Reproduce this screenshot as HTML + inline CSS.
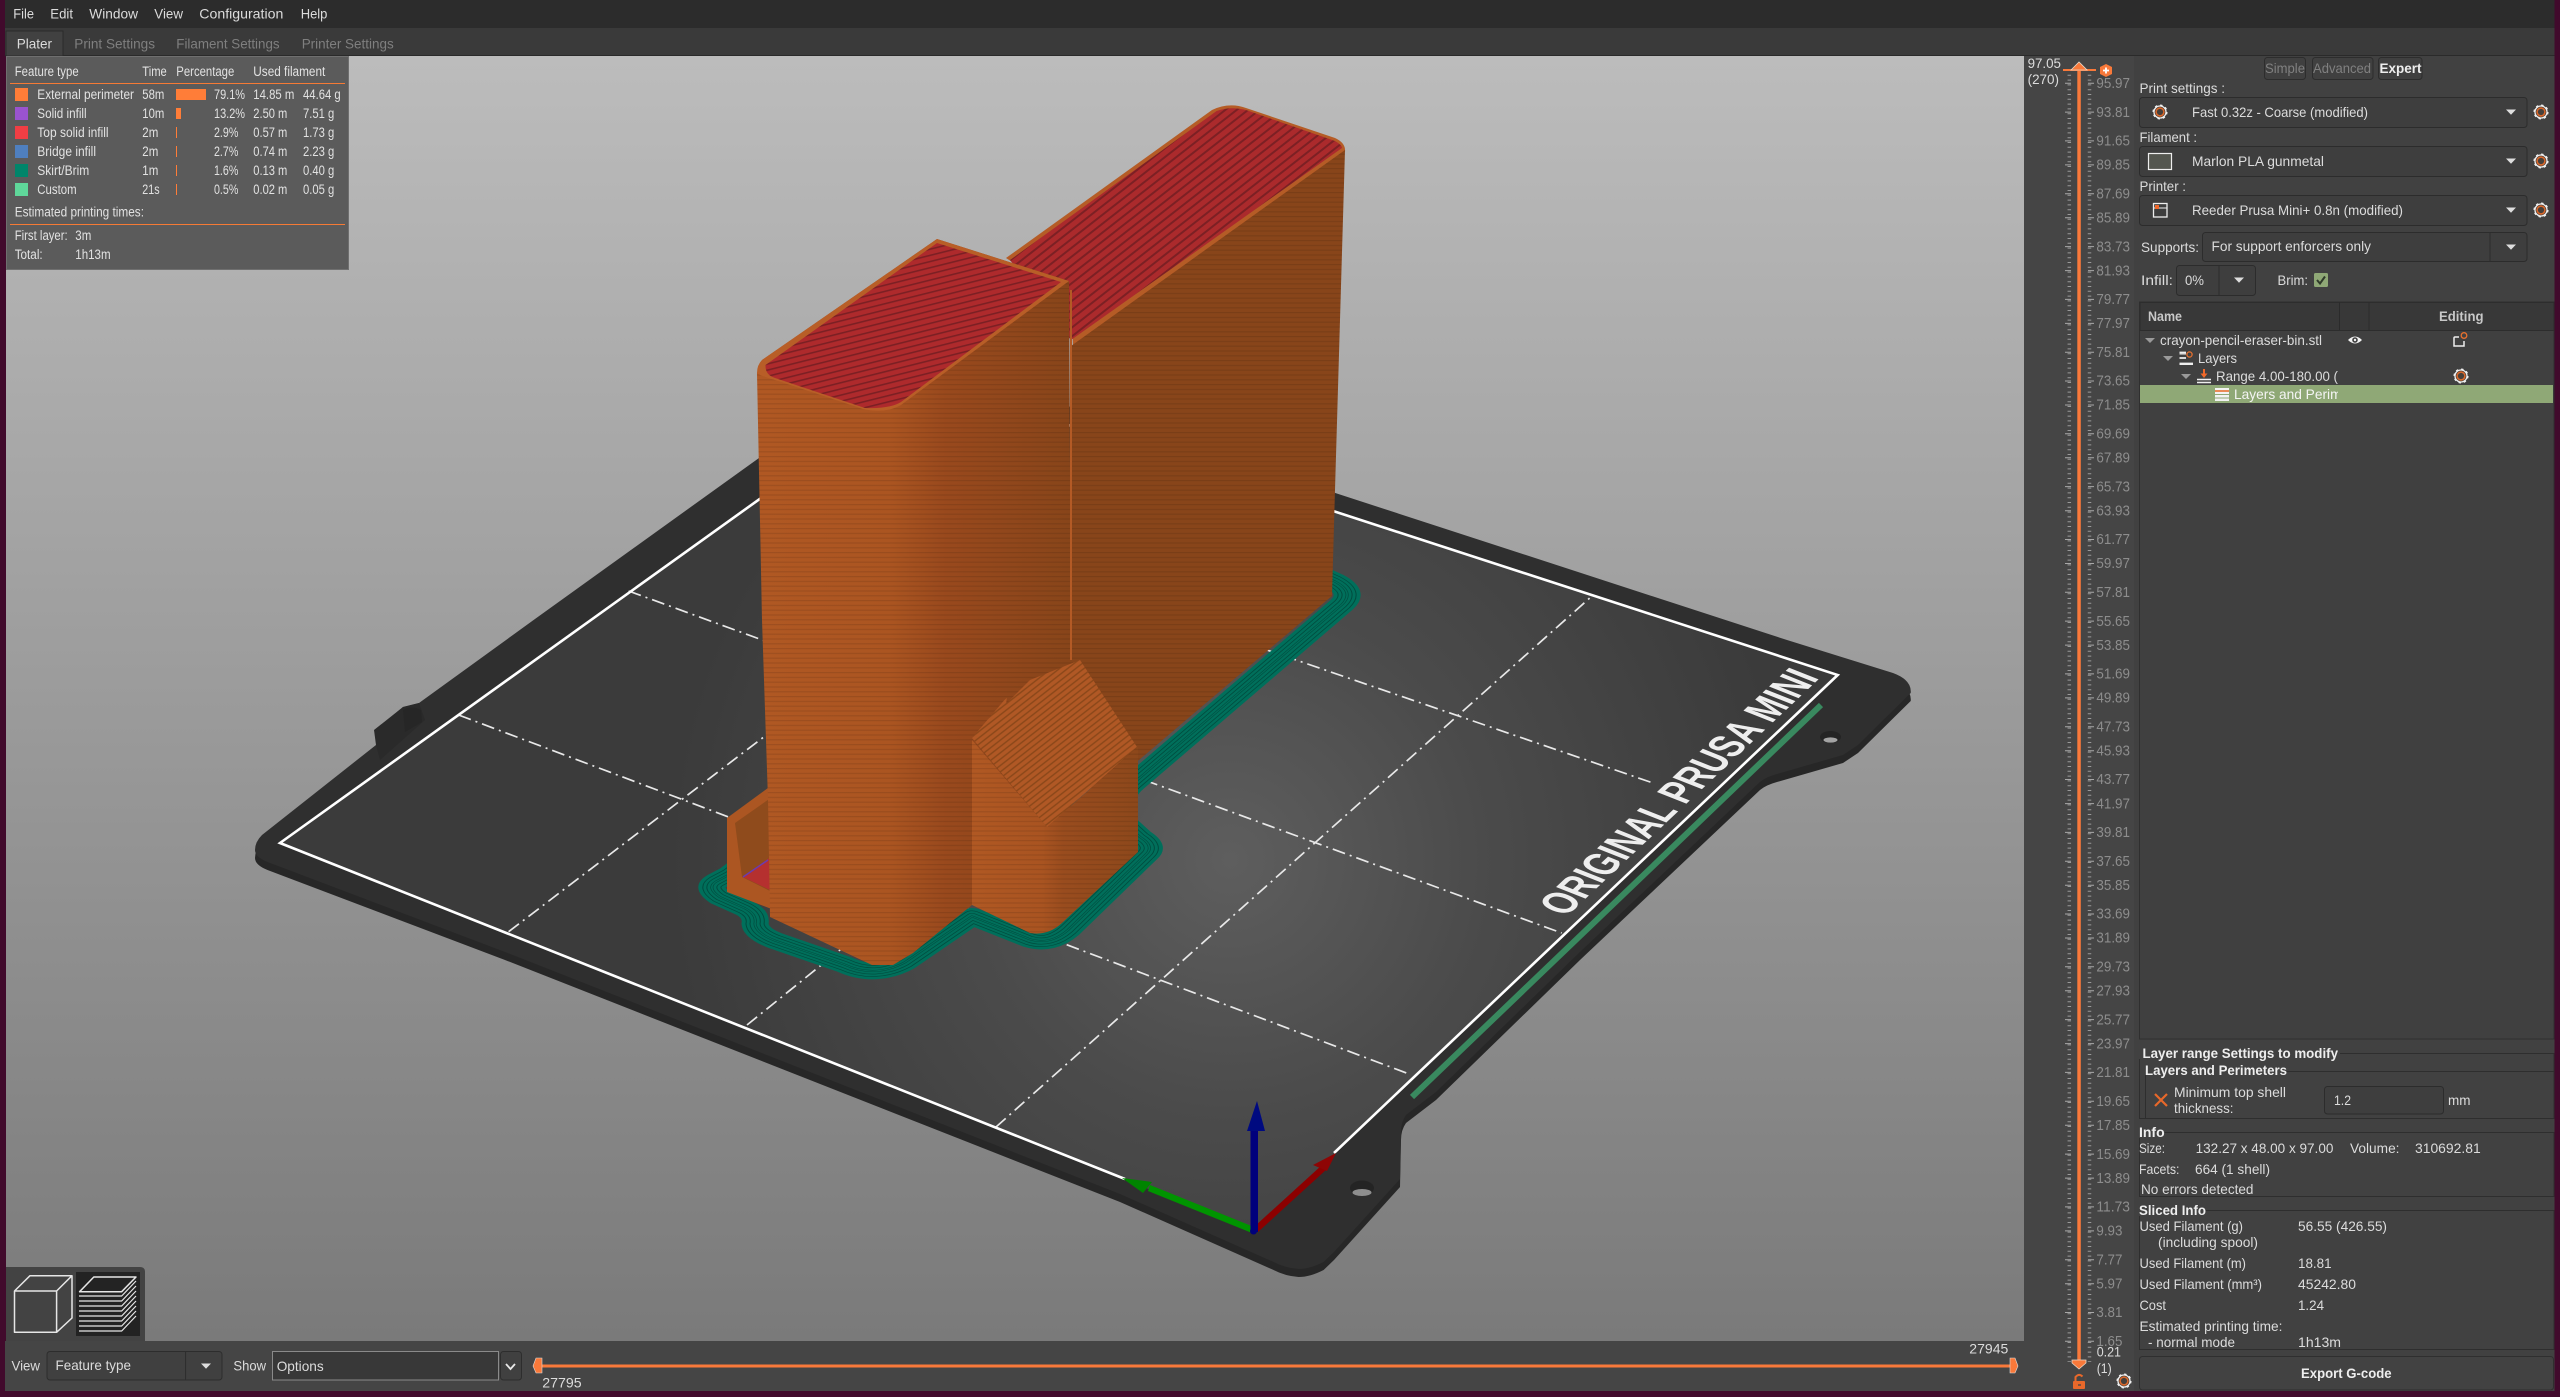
<!DOCTYPE html>
<html lang="en"><head><meta charset="utf-8"><title>PrusaSlicer</title>
<style>
html,body{margin:0;padding:0;background:#410a2c;width:2560px;height:1397px;overflow:hidden}
svg{display:block}
text{font-family:"Liberation Sans",sans-serif;font-size:14px;fill:#dcdcdc;white-space:pre}
.l text,text.l{font-size:13.5px;fill:#e2e2e2}
.t text{fill:#8d8d8d;font-size:14.5px}
.b{font-weight:bold}
.g{fill:#eee}
</style></head><body>
<svg width="2560" height="1397" viewBox="0 0 2560 1397" xmlns="http://www.w3.org/2000/svg">
<defs>
<linearGradient id="bg" x1="0" y1="56" x2="0" y2="1341" gradientUnits="userSpaceOnUse"><stop offset="0" stop-color="#bcbcbc"/><stop offset="1" stop-color="#7a7a7a"/></linearGradient>
<radialGradient id="pl" gradientUnits="userSpaceOnUse" cx="1230" cy="860" r="560"><stop offset="0" stop-color="#5e5e5e"/><stop offset=".45" stop-color="#4b4b4b"/><stop offset="1" stop-color="#3b3b3b"/></radialGradient>
<linearGradient id="tw" gradientUnits="userSpaceOnUse" x1="757" y1="0" x2="1071" y2="0"><stop offset="0" stop-color="#b05823"/><stop offset=".42" stop-color="#ab5521"/><stop offset=".6" stop-color="#99491d"/><stop offset="1" stop-color="#88451a"/></linearGradient>
<linearGradient id="ho" gradientUnits="userSpaceOnUse" x1="972" y1="0" x2="1138" y2="0"><stop offset="0" stop-color="#b05823"/><stop offset=".42" stop-color="#a95421"/><stop offset=".55" stop-color="#994c1e"/><stop offset="1" stop-color="#8d481b"/></linearGradient>
<pattern id="st" width="5" height="4.8" patternUnits="userSpaceOnUse"><rect width="5" height="1.2" fill="#000" opacity=".1"/></pattern>
<pattern id="rs" width="7" height="7" patternUnits="userSpaceOnUse" patternTransform="rotate(52)"><rect width="7" height="7" fill="#ab2a2c"/><rect width="2" height="7" fill="#7c2024"/></pattern>
<pattern id="rt" width="7" height="6" patternUnits="userSpaceOnUse" patternTransform="rotate(-14)"><rect width="7" height="6" fill="#ae2a2c"/><rect y="4" width="7" height="1.6" fill="#7c2024"/></pattern>
<pattern id="rf" width="5" height="5" patternUnits="userSpaceOnUse" patternTransform="rotate(-38)"><rect width="5" height="5" fill="#b05825"/><rect y="3.4" width="5" height="1.4" fill="#8a4719"/></pattern>
<path id="bed" d="M255,850Q255,842 262,835L376,745L376,730L403,707L419,703L533.6,620L905,353L1787,640L1893,673Q1912,680 1910.7,693L1858,745L1843,755L1777,774Q1766,777 1760,782L1580,952L1436,1092L1406,1115Q1401,1122 1401,1132L1400,1179L1334,1252L1323.6,1262Q1310,1269 1298.6,1269Q1285,1268 1273.6,1262L1120,1194L505,952L267.5,862Q255,857 255,850Z"/>
<path id="sk" fill="none" stroke-linejoin="round" stroke-linecap="round" d="M730,1410L716,1422Q706,1432 720,1447L745,1465Q757,1475 755,1490Q756,1505 775,1517L845,1556Q875,1578 905,1552L972,1478L1030,1515Q1050,1525 1068,1500L1146,1378Q1155,1365 1140,1350L1110,1306L1130,1268L1342,975Q1355,955 1335,938L1200,839Z"/>
<polygon id="twp" points="757,373 762,360 937,239 1069,281 1071,660 1071,870 972,905 913,953 893,965 872,965 770,917 768,800 762,620"/>
<polygon id="wlp" points="1071,346 1345,150 1335,490 1332,596 1139,760 1071,800"/>
<path id="hop" d="M972,740L1047,827L1138,747V852L1062,923Q1048,936 1030,933L972,905Z"/>
<g id="cog"><circle r="6" fill="#3f3a36" stroke="#f0f0f0" stroke-width="1.300"/><circle r="6.900" fill="none" stroke="#f0f0f0" stroke-width="1.300" stroke-dasharray="2.500 2.900"/><circle r="3.900" fill="#46403b" stroke="#d9682c" stroke-width="1.600"/></g>
<polygon id="ar" points="-5,-2.5 5,-2.5 0,2.8" fill="#dedede"/>
</defs>

<rect width="2560" height="1397" fill="#410a2c"/>
<rect x="5" y="0" width="2550" height="28" fill="#2c2c2c"/>
<rect x="5" y="28" width="2550" height="28" fill="#3a3a3a"/>
<rect x="5" y="55" width="2550" height="1" fill="#2a2a2a"/>
<rect x="6" y="31" width="57" height="25" fill="#414141" stroke="#2a2a2a"/>

<g fill="#e0e0e0">
<text x="13.3" y="18.7" textLength="20.7" lengthAdjust="spacingAndGlyphs">File</text>
<text x="50.3" y="18.7" textLength="22.7" lengthAdjust="spacingAndGlyphs">Edit</text>
<text x="89.3" y="18.7" textLength="48.7" lengthAdjust="spacingAndGlyphs">Window</text>
<text x="154.3" y="18.7" textLength="28.7" lengthAdjust="spacingAndGlyphs">View</text>
<text x="199.3" y="18.7" textLength="84" lengthAdjust="spacingAndGlyphs">Configuration</text>
<text x="300.7" y="18.7" textLength="26.7" lengthAdjust="spacingAndGlyphs">Help</text>
<text x="16.7" y="48.7" textLength="35.3" lengthAdjust="spacingAndGlyphs">Plater</text>
<text x="74.3" y="48.7" textLength="80.7" lengthAdjust="spacingAndGlyphs" style="fill:#7f7f7f">Print Settings</text>
<text x="176.3" y="48.7" textLength="103.3" lengthAdjust="spacingAndGlyphs" style="fill:#7f7f7f">Filament Settings</text>
<text x="301.7" y="48.7" textLength="92" lengthAdjust="spacingAndGlyphs" style="fill:#7f7f7f">Printer Settings</text>
</g>

<!-- 3D canvas -->
<rect x="6" y="56" width="2018" height="1285" fill="url(#bg)"/>
<use href="#bed" y="8" fill="#272727"/>
<use href="#bed" fill="#2f2f2f"/>
<path d="M376,745L374,730L403,707L419,703L425,720L380,760Z" fill="#2a2a2a"/>
<path d="M403,710Q412,705 421,710L422,722L405,732Z" fill="#262626"/>
<polygon points="280,843 927,379 1837.7,675 1254,1231" fill="url(#pl)"/>
<g fill="none" stroke="#e8e8e8" stroke-width="1.7" stroke-dasharray="13 5 2 5">
<path d="M458.6,715L1409,1074"/>
<path d="M628.6,591L1561.7,933"/>
<path d="M1000,558L1653,783"/>
<path d="M508.6,931.7L900,633"/>
<path d="M747,1025L1100,740"/>
<path d="M996,1127L1592,596"/>
</g>
<path d="M1125,1179L280,843L927,379L1837.7,675L1334,1153" fill="none" stroke="#fff" stroke-width="2.6"/>
<text transform="matrix(0.728,-0.685,0.93,0.37,1566,917)" x="0" y="0" textLength="349" lengthAdjust="spacingAndGlyphs" style="font-size:46px;fill:#eee;font-weight:bold">ORIGINAL PRUSA MINI</text>
<path d="M1412,1097L1821,705" stroke="#39895f" stroke-width="6" fill="none"/>
<ellipse cx="1362" cy="1188" rx="12" ry="7.5" fill="#242424"/><ellipse cx="1362" cy="1192.5" rx="9.5" ry="3.5" fill="#8e8e8e"/>
<ellipse cx="1830.500" cy="737" rx="10.500" ry="6" fill="#242424"/><ellipse cx="1830.500" cy="740" rx="7" ry="2.600" fill="#a3a3a3"/>

<!-- skirt -->
<g transform="scale(1,.62)">
<use href="#sk" stroke="#006f5b" stroke-width="27"/>
<use href="#sk" stroke="#004c3e" stroke-width="19"/>
<use href="#sk" stroke="#006f5b" stroke-width="17"/>
<use href="#sk" stroke="#004c3e" stroke-width="11"/>
<use href="#sk" stroke="#006f5b" stroke-width="9"/>
<use href="#sk" stroke="#004c3e" stroke-width="3"/>
<use href="#sk" stroke="#006f5b" stroke-width="1.600"/>
</g>

<!-- small front box -->
<polygon points="727,818 772,785 780,910 769,908 727,892" fill="#ac5622"/>
<polygon points="735,823 772,797 772,892 742,877" fill="#8f4b1c"/>
<polygon points="743,877 772,856 772,891" fill="#b5302f"/>
<path d="M743,877L768,860" stroke="#6a3bb0" stroke-width="1.500" fill="none"/>

<!-- back wall -->
<path d="M1006,258L1212,110Q1229,102 1246,108L1335,138Q1346,143 1345,152L1073,346L1071,300Z" fill="#b55c26"/>
<path d="M1010,260L1216.600,111Q1230,106 1246,110L1335,141Q1342,145 1342,148L1071,340Z" fill="url(#rs)"/>
<use href="#wlp" fill="#88451a"/><use href="#wlp" fill="url(#st)"/>

<!-- tower -->
<use href="#twp" fill="url(#tw)"/><use href="#twp" fill="url(#st)"/>
<path d="M757,373Q757,365 762,360L937,239L1069,281L901,405Q885,414 863,409L775,380Q758,375 757,373Z" fill="#b85e27"/>
<path d="M765.500,365L937,243L1061,282L901,402Q890,409 865,408L775,378Q765,375 765.500,365Z" fill="url(#rt)"/>
<path d="M1071,290V660" stroke="#b35a25" stroke-width="2" fill="none"/>

<!-- small house -->
<use href="#hop" fill="url(#ho)"/><use href="#hop" fill="url(#st)"/>
<polygon points="972,738 1007,697 1006,704 1030,680 1080,660 1137,747 1047,827" fill="url(#rf)"/>

<!-- axes -->
<polygon points="1254,1232 1255,1226 1322,1165 1327,1169 1258,1232" fill="#8c0000"/>
<polygon points="1336,1153 1313,1165 1327,1171" fill="#8e0505"/>
<polygon points="1252,1233 1148,1191 1150,1185 1254,1227" fill="#009400"/>
<polygon points="1122,1178 1152,1182 1143,1193" fill="#008400"/>
<rect x="1250.500" y="1130" width="7.500" height="102" fill="#00007c"/>
<circle cx="1253.500" cy="1231" r="3.500" fill="#00007c"/>
<polygon points="1257,1101 1247,1131 1265,1131" fill="#000a80"/>

<!-- legend -->
<rect x="6.500" y="56.500" width="342" height="213" fill="#5b5b5b" stroke="#6f6f6f"/>
<rect x="10" y="83" width="335" height="1" fill="#f57a35"/>
<rect x="10" y="224" width="335" height="1" fill="#f57a35"/>
<g class="l">
<text x="14.700" y="76" textLength="64" lengthAdjust="spacingAndGlyphs">Feature type</text>
<text x="142.300" y="76" textLength="24.500" lengthAdjust="spacingAndGlyphs">Time</text>
<text x="176.300" y="76" textLength="58" lengthAdjust="spacingAndGlyphs">Percentage</text>
<text x="253.300" y="76" textLength="72" lengthAdjust="spacingAndGlyphs">Used filament</text>

<rect x="15" y="88" width="13" height="13" fill="#ff7d38"/>
<rect x="15" y="107" width="13" height="13" fill="#9a53cf"/>
<rect x="15" y="126" width="13" height="13" fill="#f03e44"/>
<rect x="15" y="145" width="13" height="13" fill="#4f7fbf"/>
<rect x="15" y="164" width="13" height="13" fill="#00856a"/>
<rect x="15" y="183" width="13" height="13" fill="#5fd79a"/>
<g fill="#ff7d38">
<rect x="176" y="89" width="30" height="11"/><rect x="176" y="108" width="5" height="11"/><rect x="176" y="127" width="1" height="11"/><rect x="176" y="146" width="1" height="11"/><rect x="176" y="165" width="1" height="11"/><rect x="176" y="184" width="1" height="11"/>
</g>
<text x="37.300" y="99" textLength="96.700" lengthAdjust="spacingAndGlyphs">External perimeter</text>
<text x="142.300" y="99" textLength="22" lengthAdjust="spacingAndGlyphs">58m</text>
<text x="214" y="99" textLength="31" lengthAdjust="spacingAndGlyphs">79.1%</text>
<text x="253.300" y="99" textLength="41" lengthAdjust="spacingAndGlyphs">14.85 m</text>
<text x="303" y="99" textLength="37.700" lengthAdjust="spacingAndGlyphs">44.64 g</text>

<text x="37.300" y="118" textLength="49.300" lengthAdjust="spacingAndGlyphs">Solid infill</text>
<text x="142.300" y="118" textLength="22" lengthAdjust="spacingAndGlyphs">10m</text>
<text x="214" y="118" textLength="31" lengthAdjust="spacingAndGlyphs">13.2%</text>
<text x="253.300" y="118" textLength="34" lengthAdjust="spacingAndGlyphs">2.50 m</text>
<text x="303" y="118" textLength="31.300" lengthAdjust="spacingAndGlyphs">7.51 g</text>

<text x="37.300" y="137" textLength="71.300" lengthAdjust="spacingAndGlyphs">Top solid infill</text>
<text x="142.300" y="137" textLength="16" lengthAdjust="spacingAndGlyphs">2m</text>
<text x="214" y="137" textLength="24.300" lengthAdjust="spacingAndGlyphs">2.9%</text>
<text x="253.300" y="137" textLength="34" lengthAdjust="spacingAndGlyphs">0.57 m</text>
<text x="303" y="137" textLength="31.300" lengthAdjust="spacingAndGlyphs">1.73 g</text>

<text x="37.300" y="156" textLength="58.700" lengthAdjust="spacingAndGlyphs">Bridge infill</text>
<text x="142.300" y="156" textLength="16" lengthAdjust="spacingAndGlyphs">2m</text>
<text x="214" y="156" textLength="24.300" lengthAdjust="spacingAndGlyphs">2.7%</text>
<text x="253.300" y="156" textLength="34" lengthAdjust="spacingAndGlyphs">0.74 m</text>
<text x="303" y="156" textLength="31.300" lengthAdjust="spacingAndGlyphs">2.23 g</text>

<text x="37.300" y="175" textLength="52" lengthAdjust="spacingAndGlyphs">Skirt/Brim</text>
<text x="142.300" y="175" textLength="16" lengthAdjust="spacingAndGlyphs">1m</text>
<text x="214" y="175" textLength="24.300" lengthAdjust="spacingAndGlyphs">1.6%</text>
<text x="253.300" y="175" textLength="34" lengthAdjust="spacingAndGlyphs">0.13 m</text>
<text x="303" y="175" textLength="31.300" lengthAdjust="spacingAndGlyphs">0.40 g</text>

<text x="37.300" y="194" textLength="39.300" lengthAdjust="spacingAndGlyphs">Custom</text>
<text x="142.300" y="194" textLength="17.300" lengthAdjust="spacingAndGlyphs">21s</text>
<text x="214" y="194" textLength="24.300" lengthAdjust="spacingAndGlyphs">0.5%</text>
<text x="253.300" y="194" textLength="34" lengthAdjust="spacingAndGlyphs">0.02 m</text>
<text x="303" y="194" textLength="31.300" lengthAdjust="spacingAndGlyphs">0.05 g</text>

<text x="14.700" y="216.700" textLength="129.300" lengthAdjust="spacingAndGlyphs">Estimated printing times:</text>
<text x="14.700" y="240" textLength="53" lengthAdjust="spacingAndGlyphs">First layer:</text>
<text x="75.300" y="240" textLength="16" lengthAdjust="spacingAndGlyphs">3m</text>
<text x="14.700" y="259" textLength="28" lengthAdjust="spacingAndGlyphs">Total:</text>
<text x="75.300" y="259" textLength="35.300" lengthAdjust="spacingAndGlyphs">1h13m</text>
</g>

<!-- bottom bar -->
<rect x="5" y="1341" width="2129" height="50" fill="#454545"/>
<path d="M6,1267H140Q145,1267 145,1272V1341H6Z" fill="#434343"/>
<rect x="76" y="1272" width="64" height="64" fill="#232323"/>
<g fill="none" stroke="#e6e6e6" stroke-width="1.500" stroke-linejoin="round">
<path d="M14.500,1291L30,1275.700H72L56.600,1291ZM14.500,1291V1332.300H56.600V1291M72,1275.700V1318L56.600,1332.300" fill="none"/>
<path d="M79.600,1291.700L93.800,1277H136L121.700,1291.700Z"/>
<path d="M136,1281L121.700,1296H79M136,1286L121.700,1301H79M136,1291L121.700,1306H79M136,1296L121.700,1311H79M136,1301L121.700,1316H79M136,1306L121.700,1321H79M136,1311L121.700,1326H79M136,1316L121.700,1331H79" stroke-width="1.200"/>
</g>
<text x="11.500" y="1370.700" textLength="28.500" lengthAdjust="spacingAndGlyphs">View</text>
<rect x="47" y="1351.500" width="175" height="28.500" rx="3" fill="#404040" stroke="#2d2d2d"/>
<path d="M185.600,1352V1380" stroke="#2d2d2d"/>
<text x="55.500" y="1370" textLength="75.500" lengthAdjust="spacingAndGlyphs">Feature type</text>
<use href="#ar" x="206" y="1366"/>
<text x="233.400" y="1370.700" textLength="32.600" lengthAdjust="spacingAndGlyphs">Show</text>
<rect x="272.500" y="1351.500" width="226" height="28.500" fill="#383838" stroke="#8a8a8a"/>
<text x="276.700" y="1371" textLength="47" lengthAdjust="spacingAndGlyphs">Options</text>
<rect x="500.500" y="1351.500" width="21" height="28.500" rx="3" fill="#404040" stroke="#2d2d2d"/>
<path d="M506,1364L510.500,1369L515,1364" fill="none" stroke="#e8e8e8" stroke-width="1.800"/>

<!-- horizontal slider -->
<rect x="540" y="1364.500" width="1472" height="3" fill="#f9793a"/>
<polygon points="542,1358 536,1358 533,1366 536,1373 542,1373" fill="#f9793a" stroke="#ddd" stroke-width=".6"/>
<polygon points="2010,1358 2015,1358 2018,1366 2015,1373 2010,1373" fill="#f9793a" stroke="#ddd" stroke-width=".6"/>
<text x="542.300" y="1387.700" textLength="39.400" lengthAdjust="spacingAndGlyphs">27795</text>
<text x="1969.300" y="1353.700" textLength="39" lengthAdjust="spacingAndGlyphs">27945</text>

<!-- vertical slider gutter -->
<rect x="2024" y="56" width="110" height="1335" fill="#454545"/>
<path d="M2069.300,70V1362" stroke="#9a9a9a" stroke-width="3.500" stroke-dasharray="1 3.800" fill="none"/>
<path d="M2089.500,70V1362" stroke="#9a9a9a" stroke-width="3.500" stroke-dasharray="1 3.800" fill="none"/>
<path stroke="#a8a8a8" fill="none" d="M2065,83.300h6M2088,83.300h6M2065,112.100h6M2088,112.100h6M2065,140.900h6M2088,140.900h6M2065,164.900h6M2088,164.900h6M2065,193.700h6M2088,193.700h6M2065,217.700h6M2088,217.700h6M2065,246.600h6M2088,246.600h6M2065,270.600h6M2088,270.600h6M2065,299.400h6M2088,299.400h6M2065,323.400h6M2088,323.400h6M2065,352.200h6M2088,352.200h6M2065,381h6M2088,381h6M2065,405h6M2088,405h6M2065,433.800h6M2088,433.800h6M2065,457.800h6M2088,457.800h6M2065,486.600h6M2088,486.600h6M2065,510.700h6M2088,510.700h6M2065,539.500h6M2088,539.500h6M2065,563.500h6M2088,563.500h6M2065,592.300h6M2088,592.300h6M2065,621.100h6M2088,621.100h6M2065,645.100h6M2088,645.100h6M2065,673.900h6M2088,673.900h6M2065,697.900h6M2088,697.900h6M2065,726.700h6M2088,726.700h6M2065,750.700h6M2088,750.700h6M2065,779.500h6M2088,779.500h6M2065,803.600h6M2088,803.600h6M2065,832.400h6M2088,832.400h6M2065,861.200h6M2088,861.200h6M2065,885.200h6M2088,885.200h6M2065,914h6M2088,914h6M2065,938h6M2088,938h6M2065,966.800h6M2088,966.800h6M2065,990.800h6M2088,990.800h6M2065,1019.600h6M2088,1019.600h6M2065,1043.600h6M2088,1043.600h6M2065,1072.400h6M2088,1072.400h6M2065,1101.300h6M2088,1101.300h6M2065,1125.300h6M2088,1125.300h6M2065,1154.100h6M2088,1154.100h6M2065,1178.100h6M2088,1178.100h6M2065,1206.900h6M2088,1206.900h6M2065,1230.900h6M2088,1230.900h6M2065,1259.700h6M2088,1259.700h6M2065,1283.700h6M2088,1283.700h6M2065,1312.500h6M2088,1312.500h6M2065,1341.300h6M2088,1341.300h6"/>
<rect x="2063" y="69" width="33" height="2" fill="#f9793a"/>
<rect x="2077.300" y="66" width="3.500" height="1298" fill="#f9793a"/>
<polygon points="2071,70 2079,62 2087,70" fill="#f9793a" stroke="#e8d8c8" stroke-width=".8"/>
<polygon points="2072,1360 2086,1360 2086,1363 2079,1369 2072,1363" fill="#f9793a" stroke="#e8d8c8" stroke-width=".8"/>
<polygon points="2106,64 2112,67 2112,74 2106,77 2100,74 2100,67" fill="#f9793a"/>
<path d="M2106,67.500V73.500M2103,70.500H2109" stroke="#fff" stroke-width="1.800"/>
<text x="2027.600" y="68" textLength="33.400" lengthAdjust="spacingAndGlyphs">97.05</text>
<text x="2027.600" y="84" textLength="31.400" lengthAdjust="spacingAndGlyphs">(270)</text>
<text x="2096.700" y="1356.700" textLength="24.300" lengthAdjust="spacingAndGlyphs">0.21</text>
<text x="2096.700" y="1373" textLength="15" lengthAdjust="spacingAndGlyphs">(1)</text>
<rect x="2073" y="1381" width="12" height="8" rx="1" fill="#e8682a"/>
<path d="M2075.500,1381V1377Q2079,1373 2082.500,1376.500" fill="none" stroke="#e8682a" stroke-width="2"/>
<path d="M2078,1385H2081" stroke="#444" stroke-width="1.300"/>
<use href="#cog" x="2124" y="1381"/>

<g class="t">
<text x="2096.400" y="88" textLength="33.600" lengthAdjust="spacingAndGlyphs">95.97</text>
<text x="2096.400" y="116.800" textLength="33.600" lengthAdjust="spacingAndGlyphs">93.81</text>
<text x="2096.400" y="145.600" textLength="33.600" lengthAdjust="spacingAndGlyphs">91.65</text>
<text x="2096.400" y="169.600" textLength="33.600" lengthAdjust="spacingAndGlyphs">89.85</text>
<text x="2096.400" y="198.400" textLength="33.600" lengthAdjust="spacingAndGlyphs">87.69</text>
<text x="2096.400" y="222.400" textLength="33.600" lengthAdjust="spacingAndGlyphs">85.89</text>
<text x="2096.400" y="251.300" textLength="33.600" lengthAdjust="spacingAndGlyphs">83.73</text>
<text x="2096.400" y="275.300" textLength="33.600" lengthAdjust="spacingAndGlyphs">81.93</text>
<text x="2096.400" y="304.100" textLength="33.600" lengthAdjust="spacingAndGlyphs">79.77</text>
<text x="2096.400" y="328.100" textLength="33.600" lengthAdjust="spacingAndGlyphs">77.97</text>
<text x="2096.400" y="356.900" textLength="33.600" lengthAdjust="spacingAndGlyphs">75.81</text>
<text x="2096.400" y="385.700" textLength="33.600" lengthAdjust="spacingAndGlyphs">73.65</text>
<text x="2096.400" y="409.700" textLength="33.600" lengthAdjust="spacingAndGlyphs">71.85</text>
<text x="2096.400" y="438.500" textLength="33.600" lengthAdjust="spacingAndGlyphs">69.69</text>
<text x="2096.400" y="462.500" textLength="33.600" lengthAdjust="spacingAndGlyphs">67.89</text>
<text x="2096.400" y="491.300" textLength="33.600" lengthAdjust="spacingAndGlyphs">65.73</text>
<text x="2096.400" y="515.400" textLength="33.600" lengthAdjust="spacingAndGlyphs">63.93</text>
<text x="2096.400" y="544.200" textLength="33.600" lengthAdjust="spacingAndGlyphs">61.77</text>
<text x="2096.400" y="568.200" textLength="33.600" lengthAdjust="spacingAndGlyphs">59.97</text>
<text x="2096.400" y="597" textLength="33.600" lengthAdjust="spacingAndGlyphs">57.81</text>
<text x="2096.400" y="625.800" textLength="33.600" lengthAdjust="spacingAndGlyphs">55.65</text>
<text x="2096.400" y="649.800" textLength="33.600" lengthAdjust="spacingAndGlyphs">53.85</text>
<text x="2096.400" y="678.600" textLength="33.600" lengthAdjust="spacingAndGlyphs">51.69</text>
<text x="2096.400" y="702.600" textLength="33.600" lengthAdjust="spacingAndGlyphs">49.89</text>
<text x="2096.400" y="731.400" textLength="33.600" lengthAdjust="spacingAndGlyphs">47.73</text>
<text x="2096.400" y="755.400" textLength="33.600" lengthAdjust="spacingAndGlyphs">45.93</text>
<text x="2096.400" y="784.200" textLength="33.600" lengthAdjust="spacingAndGlyphs">43.77</text>
<text x="2096.400" y="808.300" textLength="33.600" lengthAdjust="spacingAndGlyphs">41.97</text>
<text x="2096.400" y="837.100" textLength="33.600" lengthAdjust="spacingAndGlyphs">39.81</text>
<text x="2096.400" y="865.900" textLength="33.600" lengthAdjust="spacingAndGlyphs">37.65</text>
<text x="2096.400" y="889.900" textLength="33.600" lengthAdjust="spacingAndGlyphs">35.85</text>
<text x="2096.400" y="918.700" textLength="33.600" lengthAdjust="spacingAndGlyphs">33.69</text>
<text x="2096.400" y="942.700" textLength="33.600" lengthAdjust="spacingAndGlyphs">31.89</text>
<text x="2096.400" y="971.500" textLength="33.600" lengthAdjust="spacingAndGlyphs">29.73</text>
<text x="2096.400" y="995.500" textLength="33.600" lengthAdjust="spacingAndGlyphs">27.93</text>
<text x="2096.400" y="1024.300" textLength="33.600" lengthAdjust="spacingAndGlyphs">25.77</text>
<text x="2096.400" y="1048.300" textLength="33.600" lengthAdjust="spacingAndGlyphs">23.97</text>
<text x="2096.400" y="1077.100" textLength="33.600" lengthAdjust="spacingAndGlyphs">21.81</text>
<text x="2096.400" y="1106" textLength="33.600" lengthAdjust="spacingAndGlyphs">19.65</text>
<text x="2096.400" y="1130" textLength="33.600" lengthAdjust="spacingAndGlyphs">17.85</text>
<text x="2096.400" y="1158.800" textLength="33.600" lengthAdjust="spacingAndGlyphs">15.69</text>
<text x="2096.400" y="1182.800" textLength="33.600" lengthAdjust="spacingAndGlyphs">13.89</text>
<text x="2096.400" y="1211.600" textLength="33.600" lengthAdjust="spacingAndGlyphs">11.73</text>
<text x="2096.400" y="1235.600" textLength="26" lengthAdjust="spacingAndGlyphs">9.93</text>
<text x="2096.400" y="1264.400" textLength="26" lengthAdjust="spacingAndGlyphs">7.77</text>
<text x="2096.400" y="1288.400" textLength="26" lengthAdjust="spacingAndGlyphs">5.97</text>
<text x="2096.400" y="1317.200" textLength="26" lengthAdjust="spacingAndGlyphs">3.81</text>
<text x="2096.400" y="1346" textLength="26" lengthAdjust="spacingAndGlyphs">1.65</text>
</g>

<!-- right panel -->
<rect x="2134" y="56" width="420.500" height="1335" fill="#414141"/>
<g fill="#404040" stroke="#2d2d2d">
<rect x="2264.500" y="57.500" width="41" height="22" rx="3"/>
<rect x="2312.500" y="57.500" width="60.500" height="22" rx="3"/>
<rect x="2378.500" y="57.500" width="43.500" height="22" rx="3"/>
</g>
<text x="2265" y="73" textLength="40" lengthAdjust="spacingAndGlyphs" style="fill:#808080">Simple</text>
<text x="2313" y="73" textLength="58" lengthAdjust="spacingAndGlyphs" style="fill:#808080">Advanced</text>
<text x="2379.500" y="73" textLength="42" lengthAdjust="spacingAndGlyphs" class="b" style="fill:#eee">Expert</text>

<text x="2139.500" y="93" textLength="85.500" lengthAdjust="spacingAndGlyphs">Print settings :</text>
<text x="2139.500" y="142" textLength="57.500" lengthAdjust="spacingAndGlyphs">Filament :</text>
<text x="2139.500" y="191" textLength="46.500" lengthAdjust="spacingAndGlyphs">Printer :</text>
<g fill="#3e3e3e" stroke="#2c2c2c">
<rect x="2139.500" y="97.500" width="387.500" height="30" rx="3"/>
<rect x="2139.500" y="146.500" width="387.500" height="30" rx="3"/>
<rect x="2139.500" y="195.500" width="387.500" height="30" rx="3"/>
<rect x="2202.500" y="232.500" width="324.500" height="29" rx="3"/>
<rect x="2176.500" y="265.500" width="79" height="30" rx="3"/>
</g>
<path d="M2490,233V261M2219,266V295" stroke="#2c2c2c"/>
<use href="#cog" x="2160" y="112"/>
<rect x="2148.500" y="153.500" width="23" height="16" fill="#54564f" stroke="#eee" stroke-width="1.200"/>
<rect x="2153.500" y="203.500" width="13.500" height="13.500" fill="none" stroke="#eee" stroke-width="1.300"/>
<path d="M2153.500,208H2167" stroke="#eee"/><rect x="2155" y="205" width="4" height="4" fill="#f0682a"/>
<text x="2192" y="117" textLength="176" lengthAdjust="spacingAndGlyphs">Fast 0.32z - Coarse (modified)</text>
<text x="2192" y="166" textLength="132" lengthAdjust="spacingAndGlyphs">Marlon PLA gunmetal</text>
<text x="2192" y="215" textLength="211" lengthAdjust="spacingAndGlyphs">Reeder Prusa Mini+ 0.8n (modified)</text>
<use href="#ar" x="2511" y="112"/><use href="#ar" x="2511" y="161"/><use href="#ar" x="2511" y="210"/><use href="#ar" x="2511" y="247"/><use href="#ar" x="2239" y="280"/>
<use href="#cog" x="2541" y="112"/><use href="#cog" x="2541" y="161"/><use href="#cog" x="2541" y="210"/>
<text x="2141" y="252" textLength="58" lengthAdjust="spacingAndGlyphs">Supports:</text>
<text x="2211.500" y="251" textLength="159.500" lengthAdjust="spacingAndGlyphs">For support enforcers only</text>
<text x="2141" y="285" textLength="32" lengthAdjust="spacingAndGlyphs">Infill:</text>
<text x="2185" y="285" textLength="19" lengthAdjust="spacingAndGlyphs">0%</text>
<text x="2277.500" y="285" textLength="30.500" lengthAdjust="spacingAndGlyphs">Brim:</text>
<rect x="2314" y="273" width="14" height="14" rx="1.500" fill="#8fa876"/>
<path d="M2317,280L2320,283.500L2325,276.500" fill="none" stroke="#2f3a2a" stroke-width="2"/>

<!-- tree -->
<rect x="2139.500" y="302" width="414.500" height="737" fill="#404040" stroke="#2f2f2f"/>
<rect x="2140" y="302.500" width="414" height="28" fill="#383838" stroke="#2d2d2d"/>
<path d="M2339.500,302V330M2369,302V330" stroke="#2b2b2b"/>
<text x="2148" y="321" textLength="34" lengthAdjust="spacingAndGlyphs" class="b" style="fill:#c8c8c8">Name</text>
<text x="2439" y="321" textLength="44.500" lengthAdjust="spacingAndGlyphs" class="b" style="fill:#c8c8c8">Editing</text>
<polygon points="2145,338 2155,338 2150,343" fill="#9a9a9a"/>
<polygon points="2163,356 2173,356 2168,361" fill="#9a9a9a"/>
<polygon points="2181,374 2191,374 2186,379" fill="#9a9a9a"/>
<text x="2160" y="345" textLength="162" lengthAdjust="spacingAndGlyphs">crayon-pencil-eraser-bin.stl</text>
<text x="2198" y="363" textLength="39" lengthAdjust="spacingAndGlyphs">Layers</text>
<text x="2216" y="381" textLength="122" lengthAdjust="spacingAndGlyphs">Range 4.00-180.00 (</text>
<path d="M2348,340Q2355,333 2362,340Q2355,347 2348,340Z" fill="#f2f2f2"/><circle cx="2355" cy="340" r="2.800" fill="#404040"/><circle cx="2355" cy="340" r="1.200" fill="#f2f2f2"/>
<path d="M2459,337H2455Q2454,337 2454,338V346H2464V341" fill="none" stroke="#eee" stroke-width="1.500"/><circle cx="2464" cy="335.500" r="2.800" fill="none" stroke="#e8702e" stroke-width="1.300"/>
<path d="M2179.500,352.500H2186M2179.500,358H2186M2179.500,363.500H2193" stroke="#eee" stroke-width="1.800"/><path d="M2179.500,354H2186M2179.500,364.500H2193" stroke="#eee" stroke-width="1"/><circle cx="2189.500" cy="354.500" r="2.600" fill="none" stroke="#e8702e" stroke-width="1.300"/>
<path d="M2204,369V375" stroke="#f0682a" stroke-width="2"/><polygon points="2200.500,373.500 2207.500,373.500 2204,378" fill="#f0682a"/><path d="M2197,379.500H2211M2197,382.500H2211" stroke="#eee" stroke-width="1.600"/>
<use href="#cog" x="2461" y="376"/>
<rect x="2140" y="385" width="413" height="18" fill="#8fa876"/>
<rect x="2215" y="388" width="14" height="13" fill="#f2f2f2"/><path d="M2215,391H2229" stroke="#e8702e" stroke-width="1.600"/><path d="M2215,394.500H2229M2215,398H2229" stroke="#8fa876"/>
<svg x="2230" y="385" width="108" height="18" viewBox="2230 385 108 18"><text x="2234" y="399" textLength="138" lengthAdjust="spacingAndGlyphs" style="fill:#f4f4f4">Layers and Perimeters</text></svg>

<!-- settings groups -->
<g fill="none" stroke="#2e2e2e">
<path d="M2340,1053.500H2554V1118.500H2139.500V1059"/>
<path d="M2287,1071.500H2554M2145.500,1075V1118"/>
<path d="M2165,1132.500H2554V1196.500H2139.500V1138"/>
<path d="M2206,1210.500H2554V1349.500H2139.500V1216"/>
</g>
<text x="2142.500" y="1058" textLength="195.500" lengthAdjust="spacingAndGlyphs" class="b g">Layer range Settings to modify</text>
<text x="2145" y="1075" textLength="142" lengthAdjust="spacingAndGlyphs" class="b g">Layers and Perimeters</text>
<path d="M2155,1094L2167,1106M2167,1094L2155,1106" stroke="#e8682a" stroke-width="2.200" fill="none"/>
<text x="2174" y="1097" textLength="112" lengthAdjust="spacingAndGlyphs">Minimum top shell</text>
<text x="2174" y="1113" textLength="59.500" lengthAdjust="spacingAndGlyphs">thickness:</text>
<rect x="2324.500" y="1086.500" width="119" height="27.500" rx="3" fill="#3e3e3e" stroke="#2c2c2c"/>
<text x="2334" y="1105" textLength="17" lengthAdjust="spacingAndGlyphs">1.2</text>
<text x="2448" y="1105" textLength="22.500" lengthAdjust="spacingAndGlyphs">mm</text>
<text x="2139" y="1137" textLength="25.600" lengthAdjust="spacingAndGlyphs" class="b g">Info</text>
<text x="2139" y="1153" textLength="26" lengthAdjust="spacingAndGlyphs">Size:</text>
<text x="2195.600" y="1153" textLength="137.800" lengthAdjust="spacingAndGlyphs">132.27 x 48.00 x 97.00</text>
<text x="2350" y="1153" textLength="49.500" lengthAdjust="spacingAndGlyphs">Volume:</text>
<text x="2415" y="1153" textLength="65.700" lengthAdjust="spacingAndGlyphs">310692.81</text>
<text x="2139" y="1174" textLength="40.400" lengthAdjust="spacingAndGlyphs">Facets:</text>
<text x="2195" y="1174" textLength="75" lengthAdjust="spacingAndGlyphs">664 (1 shell)</text>
<text x="2141" y="1194" textLength="112.500" lengthAdjust="spacingAndGlyphs">No errors detected</text>
<text x="2139" y="1215" textLength="67" lengthAdjust="spacingAndGlyphs" class="b g">Sliced Info</text>
<text x="2139.500" y="1231" textLength="103.500" lengthAdjust="spacingAndGlyphs">Used Filament (g)</text>
<text x="2298" y="1231" textLength="89" lengthAdjust="spacingAndGlyphs">56.55 (426.55)</text>
<text x="2158" y="1247" textLength="100" lengthAdjust="spacingAndGlyphs">(including spool)</text>
<text x="2139.500" y="1268" textLength="106.500" lengthAdjust="spacingAndGlyphs">Used Filament (m)</text>
<text x="2298" y="1268" textLength="33.600" lengthAdjust="spacingAndGlyphs">18.81</text>
<text x="2139.500" y="1289" textLength="122.500" lengthAdjust="spacingAndGlyphs">Used Filament (mm³)</text>
<text x="2298" y="1289" textLength="58" lengthAdjust="spacingAndGlyphs">45242.80</text>
<text x="2139.500" y="1310" textLength="26.500" lengthAdjust="spacingAndGlyphs">Cost</text>
<text x="2298" y="1310" textLength="26" lengthAdjust="spacingAndGlyphs">1.24</text>
<text x="2139.500" y="1331" textLength="142.900" lengthAdjust="spacingAndGlyphs">Estimated printing time:</text>
<text x="2148" y="1347" textLength="87" lengthAdjust="spacingAndGlyphs">- normal mode</text>
<text x="2298" y="1347" textLength="43" lengthAdjust="spacingAndGlyphs">1h13m</text>
<rect x="2139.500" y="1356.500" width="414" height="33.500" rx="3" fill="#424242" stroke="#2f2f2f"/>
<text x="2301" y="1378" textLength="90.600" lengthAdjust="spacingAndGlyphs" class="b g">Export G-code</text>

<rect x="2554.500" y="0" width="5.500" height="1397" fill="#410a2c"/>
<rect x="0" y="1391" width="2560" height="6" fill="#410a2c"/>
<rect x="0" y="0" width="5" height="1397" fill="#410a2c"/>
</svg>
</body></html>
